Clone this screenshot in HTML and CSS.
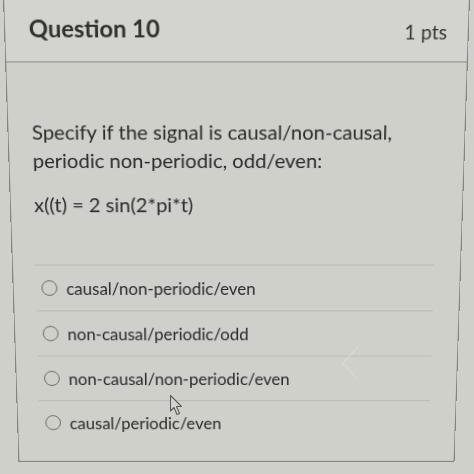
FILE: index.html
```html
<!DOCTYPE html>
<html lang="en">

<head>
    <meta charset="UTF-8">
    <meta name="viewport" content="width=device-width, initial-scale=1.0">
    <title>Question 10</title>
    <link rel="stylesheet" href="styles.css">
</head>

<body>

    <!-- **** Question Card **** -->
    <div class="question">
        <div class="question-header">
            <h2 class="question-name">Question 10</h2>
            <span class="points">1 pts</span>
        </div>

        <div class="question-body">
            <p class="question-text">Specify if the signal is causal/non-causal, periodic non-periodic, odd/even:</p>
            <p class="formula">x((t) = 2 sin(2*pi*t)</p>

            <ul class="answers">
                <li><span class="radio"></span>causal/non-periodic/even</li>
                <li><span class="radio"></span>non-causal/periodic/odd</li>
                <li><span class="radio"></span>non-causal/non-periodic/even</li>
                <li><span class="radio"></span>causal/periodic/even</li>
            </ul>
        </div>
    </div>

    <!-- reflection on the screen -->
    <svg class="glare" width="24" height="40" viewBox="0 0 24 40">
        <path d="M18 3 L3 19 L17 35" fill="none" stroke="#dcddd8" stroke-width="1.5" opacity="0.7"/>
    </svg>

    <!-- mouse pointer -->
    <svg class="pointer" width="16" height="24" viewBox="0 0 16 24">
        <path d="M1.5 1.5 L1.5 17 L5 13.5 L8 20.5 L10.5 19.5 L7.5 12.5 L12.5 12.5 Z" fill="#d3d4cf" stroke="#5d5e58" stroke-width="1.1" stroke-linejoin="round"/>
    </svg>

</body>

</html>
```

FILE: styles.css
```css
/* Reset CSS */
* {
    margin: 0;
    padding: 0;
    box-sizing: border-box;
}

:root {
    --screen: #cfd0ca;
    --header: #d3d4cf;
    --border: #85867f;
    --rule: #b9bab4;
    --text: #2a2b29;
}

body {
    width: 474px;
    height: 474px;
    overflow: hidden;
    position: relative;
    background: var(--screen);
    font-family: Lato, "Open Sans", sans-serif;
    color: var(--text);
}

/* Question card, tilted a little like the photo */
.question {
    width: 451px;
    height: 470px;
    margin: 2px 0 0 11px;
    border: 1.5px solid var(--border);
    background: var(--screen);
    transform: perspective(1000px) rotateX(-8.4deg);
    display: flex;
    flex-direction: column;
}

.question-header {
    display: flex;
    justify-content: space-between;
    align-items: baseline;
    height: 62px;
    padding: 15px 20px 0 23px;
    background: var(--header);
    border-bottom: 1.5px solid #8e8f89;
}

.question-name {
    font-size: 23px;
    font-weight: 700;
    color: #30312d;
}

.points {
    font-size: 19px;
    color: #363733;
    position: relative;
    top: 2px;
}

.question-body {
    padding: 53px 0 0 0;
}

.question-text {
    font-size: 20px;
    line-height: 28px;
    padding: 0 40px 0 23px;
}

.formula {
    font-size: 20px;
    margin-top: 18px;
    padding-left: 23px;
}

.answers {
    list-style: none;
    margin: 49px 26px 0 22px;
}

.answers li {
    display: flex;
    align-items: center;
    height: 47px;
    border-top: 1px solid var(--rule);
    padding-left: 6px;
    font-size: 17px;
}

.radio {
    width: 16px;
    height: 16px;
    border: 1.5px solid #6a6b66;
    border-radius: 50%;
    margin-right: 9px;
}

/* Overlays */
.glare {
    position: absolute;
    left: 340px;
    top: 344px;
}

.pointer {
    position: absolute;
    left: 169px;
    top: 394px;
}
```
